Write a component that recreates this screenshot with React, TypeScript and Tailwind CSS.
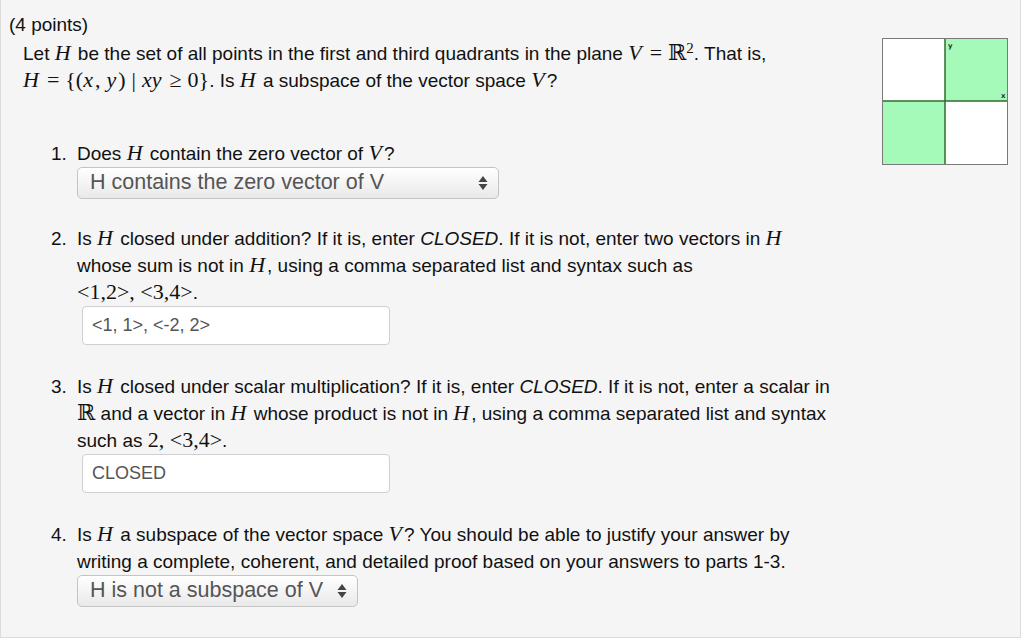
const serif = "font-['Liberation_Serif','DejaVu_Serif',serif]"

const M = ({ children, className = '' }: { children: React.ReactNode; className?: string }) => (
  <span className={`${serif} text-[22px] leading-none ${className}`}>{children}</span>
)

const I = ({ children, className = '' }: { children: React.ReactNode; className?: string }) => (
  <span className={`${serif} text-[22px] leading-none italic mr-[2px] ${className}`}>{children}</span>
)

const Arrows = () => (
  <svg width="10" height="16" viewBox="0 0 10 16">
    <path d="M5 1 L9.5 7 H0.5 Z" fill="#444" />
    <path d="M5 15 L9.5 9 H0.5 Z" fill="#444" />
  </svg>
)

const Select = ({ text, width }: { text: string; width: string }) => (
  <div
    className={`${width} h-[32px] flex items-center justify-between pl-[12px] pr-[10px] border border-[#c4c4c4] rounded-[5px] bg-gradient-to-b from-white to-[#e9e9e9] text-[21.5px] text-[#555] shadow-[inset_0_1px_0_#fff]`}
  >
    <span className="leading-none">{text}</span>
    <Arrows />
  </div>
)

const Input = ({ text, size }: { text: string; size: string }) => (
  <div
    className={`ml-[5px] w-[308px] h-[39px] flex items-center px-[9px] bg-white border border-[#cfcfcf] rounded-[4px] ${size} text-[#555]`}
  >
    {text}
  </div>
)

const Item = ({ n, children }: { n: number; children: React.ReactNode }) => (
  <div className="flex">
    <div className="w-[26px] shrink-0">{n}.</div>
    <div className="flex-1">{children}</div>
  </div>
)

const Graph = () => (
  <svg width="126" height="127" viewBox="0 0 126 127">
    <rect x="0.5" y="0.5" width="125" height="126" fill="#fff" stroke="#7a7a7a" />
    <rect x="63" y="1" width="62" height="62" fill="#a5fab9" />
    <rect x="1" y="63" width="62" height="63" fill="#a5fab9" />
    <line x1="63" y1="1" x2="63" y2="126" stroke="#2f6b2f" strokeWidth="1.5" />
    <line x1="1" y1="63" x2="125" y2="63" stroke="#2f6b2f" strokeWidth="1.5" />
    <text x="66" y="10" fontSize="7" fontWeight="bold" fontFamily="DejaVu Sans, sans-serif" fill="#333">
      y
    </text>
    <text x="119" y="60" fontSize="7" fontWeight="bold" fontFamily="DejaVu Sans, sans-serif" fill="#333">
      x
    </text>
  </svg>
)

export default function App() {
  return (
    <div className="w-[1021px] h-[638px] bg-[#f5f5f5] border-x border-b border-[#dcdcdc] flex justify-between font-['Liberation_Sans',Arial,sans-serif] text-[19px] leading-[27px] text-[#111]">
      <div className="pt-[11px] pl-[8px]">
        <div>(4 points)</div>
        <div className="ml-[14px] mt-[2px] whitespace-nowrap">
          Let <I>H</I> be the set of all points in the first and third quadrants in the plane{' '}
          <I>V</I>
          <M className="mx-[6px]">=</M>
          <M>ℝ</M>
          <sup className={`${serif} text-[15px] leading-none`}>2</sup>. That is,
          <br />
          <I>H</I>
          <M className="mx-[6px]">=</M>
          <M>{'{('}</M>
          <I className="mr-0">x</I>
          <M className="mr-[6px]">,</M>
          <I className="mr-0">y</I>
          <M>)</M>
          <M className="mx-[6px]">|</M>
          <I className="mr-0">xy</I>
          <M className="mx-[6px]">≥</M>
          <M>{'0}'}</M>. Is <I>H</I> a subspace of the vector space <I>V</I>?
        </div>

        <div className="ml-[42px] whitespace-nowrap">
          <div className="mt-[46px]">
            <Item n={1}>
              Does <I>H</I> contain the zero vector of <I>V</I>?
              <Select text="H contains the zero vector of V" width="w-[422px]" />
            </Item>
          </div>

          <div className="mt-[26px]">
            <Item n={2}>
              Is <I>H</I> closed under addition? If it is, enter <em>CLOSED</em>. If it is not, enter two
              vectors in <I>H</I>
              <br />
              whose sum is not in <I>H</I>, using a comma separated list and syntax such as
              <br />
              <M>{'<1,2>, <3,4>'}</M>.
              <Input text="<1, 1>, <-2, 2>" size="text-[18px]" />
            </Item>
          </div>

          <div className="mt-[28px]">
            <Item n={3}>
              Is <I>H</I> closed under scalar multiplication? If it is, enter <em>CLOSED</em>. If it is not,
              enter a scalar in
              <br />
              <M>ℝ</M> and a vector in <I>H</I> whose product is not in <I>H</I>, using a comma separated
              list and syntax
              <br />
              such as <M>{'2, <3,4>'}</M>.
              <Input text="CLOSED" size="text-[18px]" />
            </Item>
          </div>

          <div className="mt-[28px]">
            <Item n={4}>
              Is <I>H</I> a subspace of the vector space <I>V</I>? You should be able to justify your
              answer by
              <br />
              writing a complete, coherent, and detailed proof based on your answers to parts 1-3.
              <Select text="H is not a subspace of V" width="w-[281px]" />
            </Item>
          </div>
        </div>
      </div>

      <div className="pt-[38px] pr-[12px]">
        <Graph />
      </div>
    </div>
  )
}
